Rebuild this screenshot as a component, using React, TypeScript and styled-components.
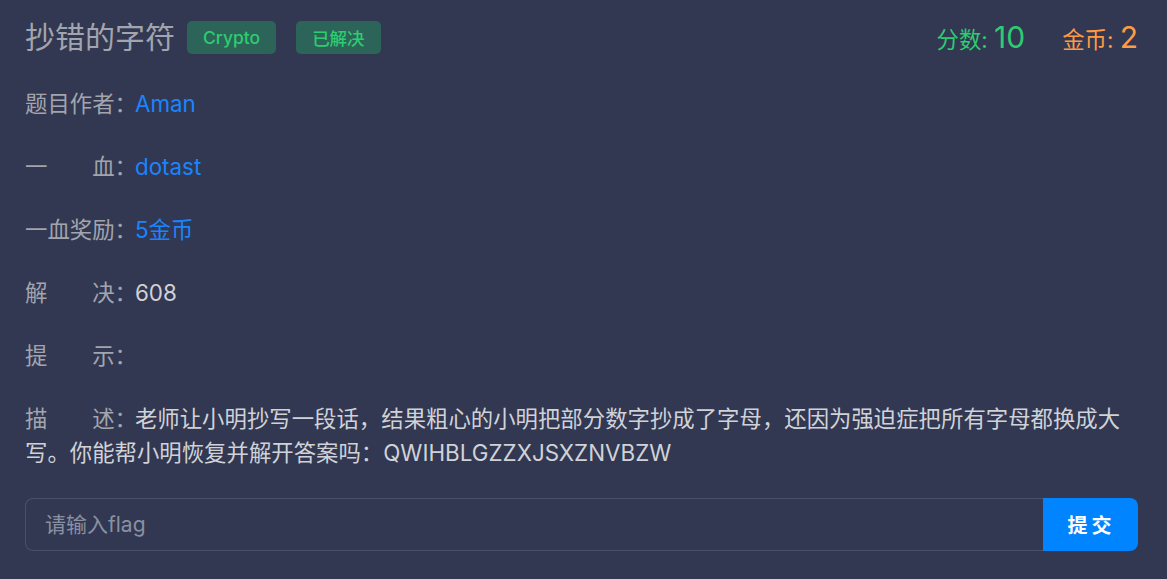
import React from 'react';
import styled, { createGlobalStyle } from 'styled-components';

const GlobalStyle = createGlobalStyle`
  html, body {
    margin: 0;
    padding: 0;
    background: #323851;
  }
  body {
    font-family: "Inter", "Noto Sans CJK SC", sans-serif;
  }
`;

interface InfoRow {
  label: string;
  value?: string;
  tone?: 'link' | 'plain';
}

const rows: InfoRow[] = [
  { label: '题目作者：', value: 'Aman', tone: 'link' },
  { label: '一　　血：', value: 'dotast', tone: 'link' },
  { label: '一血奖励：', value: '5金币', tone: 'link' },
  { label: '解　　决：', value: '608', tone: 'plain' },
  { label: '提　　示：' },
  {
    label: '描　　述：',
    value:
      '老师让小明抄写一段话，结果粗心的小明把部分数字抄成了字母，还因为强迫症把所有字母都换成大写。你能帮小明恢复并解开答案吗：QWIHBLGZZXJSXZNVBZW',
    tone: 'plain',
  },
];

const App = () => {
  return (
    <Page>
      <GlobalStyle />
      <Header>
        <Title>抄错的字符</Title>
        <Tag>Crypto</Tag>
        <Tag>已解决</Tag>
        <Stats>
          <Stat tone="green">
            分数: <StatNum>10</StatNum>
          </Stat>
          <Stat tone="orange">
            金币: <StatNum>2</StatNum>
          </Stat>
        </Stats>
      </Header>

      {rows.map((r) => (
        <Row key={r.label}>
          <Label>{r.label}</Label>
          {r.value && <Value tone={r.tone}>{r.value}</Value>}
        </Row>
      ))}

      <FlagForm onSubmit={(e) => e.preventDefault()}>
        <FlagInput placeholder="请输入flag" />
        <SubmitButton type="submit">提交</SubmitButton>
      </FlagForm>
    </Page>
  );
};

export default App;

const Page = styled.div`
  padding: 0 29px 0 25px;
  color: #c9ccd3;
`;

const Header = styled.div`
  display: flex;
  align-items: center;
  height: 74px;
  margin-bottom: 13px;
`;

const Title = styled.h1`
  margin: 0 12px 0 0;
  font-size: 30px;
  font-weight: 400;
  color: #a2a5ae;
  line-height: 1;
`;

const Tag = styled.span`
  display: inline-flex;
  align-items: center;
  justify-content: center;
  height: 33px;
  padding: 0 16px;
  margin-right: 20px;
  border-radius: 5px;
  background: #2c6459;
  color: #2ecc71;
  font-size: 17.5px;
  font-weight: 500;
`;

const Stats = styled.div`
  margin-left: auto;
  display: flex;
  align-items: baseline;
  gap: 37px;
`;

const Stat = styled.div<{ tone: 'green' | 'orange' }>`
  font-size: 22.4px;
  color: ${(p) => (p.tone === 'green' ? '#2ecc71' : '#ff9a45')};
  white-space: nowrap;
`;

const StatNum = styled.span`
  font-size: 30px;
`;

const Row = styled.p`
  margin: 0 0 29.4px;
  font-size: 22.4px;
  line-height: 33.6px;
  color: #a2a5ae;
`;

const Label = styled.span`
  color: #a2a5ae;
  margin-right: -2px;
`;

const Value = styled.span<{ tone?: 'link' | 'plain' }>`
  color: ${(p) => (p.tone === 'link' ? '#1a84ff' : '#d0d2d8')};
`;

const FlagForm = styled.form`
  display: flex;
  height: 53px;
  margin-top: -1px;
`;

const FlagInput = styled.input`
  flex: 1;
  min-width: 0;
  box-sizing: border-box;
  height: 100%;
  padding: 0 19px;
  border: 1px solid #4a5069;
  border-right: none;
  border-radius: 8px 0 0 8px;
  background: transparent;
  color: #d0d2d8;
  font-family: inherit;
  font-size: 21px;
  outline: none;

  &::placeholder {
    color: #8a90a2;
  }
`;

const SubmitButton = styled.button`
  width: 95px;
  height: 100%;
  border: none;
  border-radius: 0 8px 8px 0;
  background: #0084ff;
  color: #fff;
  font-family: inherit;
  font-size: 20px;
  font-weight: 700;
  letter-spacing: 4px;
  padding-left: 8px;
  cursor: pointer;
`;
